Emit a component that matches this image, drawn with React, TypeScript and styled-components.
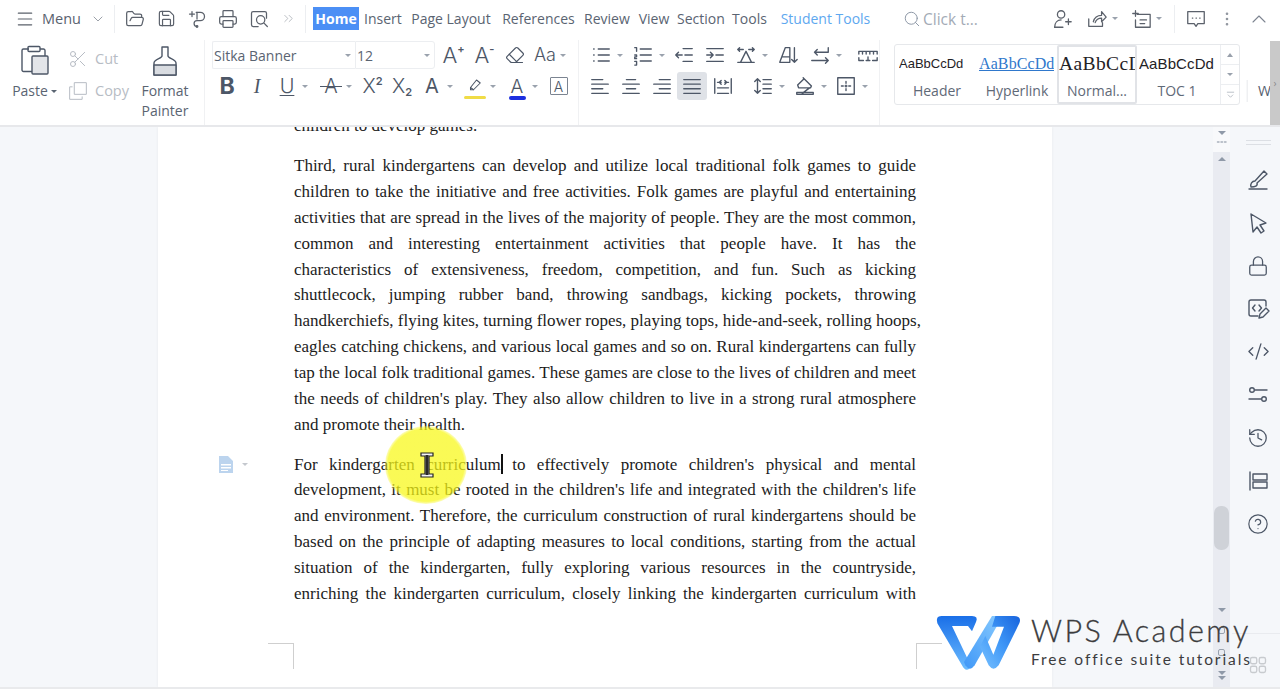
import React from "react";
import styled, { createGlobalStyle } from "styled-components";
import {
  ChevronDown, ChevronUp, ChevronsRight, CircleHelp, CodeXml, EllipsisVertical, Eraser, FolderOpen,
  History, Lock, Menu as MenuIcon, Printer, Save, Scissors, Search,
} from "lucide-react";

const Global = createGlobalStyle`
  html, body { margin: 0; padding: 0; height: 100%; overflow: hidden; background: #fff; }
  * { box-sizing: border-box; }
`;

const UI = `"Open Sans", "Noto Sans", sans-serif`;
const INK = "#4d5767";

const Root = styled.div`
  position: relative; width: 1280px; height: 689px; overflow: hidden; display: flex; flex-direction: column;
  font-family: ${UI}; color: #566070; background: #fff;
`;

/* ---------- top bar ---------- */
const TopBar = styled.header`
  display: flex; align-items: center; height: 33px; padding-left: 15px; padding-top: 4px; background: #fff;
  & > * { flex: none; }
`;
const MenuLabel = styled.span`font-size: 14.5px; margin: 0 9px 0 7px; color: #59626f;`;
const Divider = styled.span<{ $ml: number; $mr: number }>`
  width: 1px; height: 28px; flex: none; background: #eceef1; margin-left: ${(p) => p.$ml}px; margin-right: ${(p) => p.$mr}px;
`;
const QuickBtn = styled.span<{ $w?: number }>`
  display: flex; align-items: center; justify-content: center; width: ${(p) => p.$w ?? 31}px; color: #5b616b;
`;
const Tab = styled.span<{ $w: number; $active?: boolean; $accent?: boolean }>`
  display: flex; align-items: center; justify-content: center; white-space: nowrap;
  width: ${(p) => p.$w}px; height: 23px; font-size: 14px; letter-spacing: 0;
  font-weight: ${(p) => (p.$active ? 700 : 400)};
  color: ${(p) => (p.$active ? "#fff" : p.$accent ? "#5ea8ef" : "#5a6472")};
  background: ${(p) => (p.$active ? "#4b8ff5" : "transparent")};
`;
const SearchBox = styled.span`display: flex; align-items: center; gap: 2px; margin-left: 25px; width: 141px; color: #a3abb6; font-size: 15.5px;`;
const TopRight = styled.span`display: flex; align-items: center; color: #5b616b;`;
const TopBtn = styled.span<{ $w: number }>`display: flex; align-items: center; justify-content: center; flex: none; width: ${(p) => p.$w}px;`;
const SmallCaret = styled.span<{ $c?: string }>`
  display: block; width: 0; height: 0; flex: none; border-left: 3px solid transparent; border-right: 3px solid transparent;
  border-top: 3.5px solid ${(p) => p.$c ?? "#9aa2ad"};
`;

/* ---------- ribbon ---------- */
const Ribbon = styled.section`
  position: relative; display: flex; height: 94px; background: #fff; border-bottom: 2px solid #e7e8eb; z-index: 2;
`;
const Group = styled.div<{ $w: number }>`
  width: ${(p) => p.$w}px; height: 85px; margin-top: 7px; border-right: 1px solid #f0f1f3; flex: none; display: flex;
`;
const BigCol = styled.div<{ $w: number; $ml: number }>`
  width: ${(p) => p.$w}px; margin-left: ${(p) => p.$ml}px; padding-top: 5px; flex: none; display: flex; flex-direction: column; align-items: center;
  font-size: 14px; line-height: 20px; color: #5a6472; text-align: center; white-space: nowrap;
  svg { display: block; margin-bottom: 4px; flex: none; }
`;
const PasteLabel = styled.span`display: flex; align-items: center; gap: 3px;`;
const SmallCol = styled.div`width: 62px; margin-left: 12px; padding-top: 8px; flex: none; display: flex; flex-direction: column; gap: 11px;`;
const GreyAction = styled.div`display: flex; align-items: center; gap: 7px; height: 21px; font-size: 14.5px; color: #b7bcc4;`;
const Rows = styled.div<{ $pl: number }>`padding: 1px 0 0 ${(p) => p.$pl}px; display: flex; flex-direction: column; gap: 3px;`;
const Row = styled.div`display: flex; align-items: center; height: 28px;`;
const Select = styled.div<{ $w: number }>`
  display: flex; align-items: center; justify-content: space-between; width: ${(p) => p.$w}px; height: 28px; padding: 0 4px 0 1px;
  border: 1px solid #eceef1; font-size: 14px; color: #5a6472; border-right-width: 0; border-radius: 2px 0 0 2px;
  &:nth-child(2) { border-right-width: 1px; border-radius: 0 3px 3px 0; }
`;
const Tool = styled.div<{ $w: number; $ml?: number; $active?: boolean; $caret?: boolean }>`
  display: flex; align-items: center; flex: none; height: 28px; width: ${(p) => p.$w}px; margin-left: ${(p) => p.$ml ?? 0}px;
  justify-content: ${(p) => (p.$caret ? "flex-start" : "center")}; padding-left: ${(p) => (p.$caret ? 5 : 0)}px;
  gap: 5px; color: ${INK}; border-radius: 3px; background: ${(p) => (p.$active ? "#dfe2e7" : "transparent")};
`;
const Glyph = styled.span<{ $size?: number; $weight?: number; $deco?: string; $family?: string }>`
  position: relative; display: inline-flex; align-items: flex-start; justify-content: center; width: 20px; line-height: 1; color: ${INK};
  font-family: ${(p) => p.$family ?? `Inter, sans-serif`}; font-size: ${(p) => p.$size ?? 20}px; font-weight: ${(p) => p.$weight ?? 300};
  text-decoration: ${(p) => p.$deco ?? "none"}; text-underline-offset: 2px; text-decoration-thickness: 1px;
`;
const Sup = styled.sup`font-size: 11px; font-weight: 600; line-height: 1; vertical-align: top; margin-left: 0;`;
const Sub = styled.sub`font-size: 11px; font-weight: 600; line-height: 1; align-self: flex-end; margin-bottom: -2px;`;
const Strike = styled.span`position: absolute; left: -1px; right: -1px; top: 10px; height: 1px; background: ${INK};`;
const ColorBar = styled.span<{ $c: string; $wide?: boolean }>`
  position: absolute; left: ${(p) => (p.$wide ? -1 : 1.5)}px; right: ${(p) => (p.$wide ? -1 : 1.5)}px; bottom: -4px; height: 3.5px; border-radius: 2px; background: ${(p) => p.$c};
`;
const Boxed = styled.span`
  display: flex; align-items: center; justify-content: center; width: 18px; height: 18px; border: 1px solid #7b8491; border-radius: 1px;
  font: 300 14px Inter, sans-serif; color: ${INK};
`;

const Styles = styled.div`
  display: flex; flex: none; width: 346px; height: 61px; margin: 11px 0 0 14px; border: 1px solid #e6e8eb; border-radius: 3px; padding-left: 2px;
`;
const StyleItem = styled.div<{ $sel?: boolean }>`
  width: 80px; flex: none; overflow: hidden; display: flex; flex-direction: column; align-items: center;
  border: 2px solid ${(p) => (p.$sel ? "#e1e3e7" : "transparent")}; border-radius: 2px; padding-top: 3px;
`;
const Preview = styled.div<{ $font: string; $size: number; $color?: string; $line?: boolean; $ls?: number }>`
  align-self: flex-start; max-width: 76px; overflow: hidden; height: 27px; line-height: 27px; white-space: nowrap; font-family: ${(p) => p.$font}; font-size: ${(p) => p.$size}px; color: ${(p) => p.$color ?? "#1f2226"};
  text-decoration: ${(p) => (p.$line ? "underline" : "none")}; letter-spacing: ${(p) => p.$ls ?? 0}px;
`;
const StyleName = styled.div`font-size: 14px; line-height: 22px; margin-top: 3px; color: #5f6977; white-space: nowrap;`;
const StyleScroll = styled.div`width: 19px; margin-left: 3px; border-left: 1px solid #eceef1; display: flex; flex-direction: column;`;
const ScrollCell = styled.div`flex: 1; display: flex; align-items: center; justify-content: center; border-bottom: 1px solid #eceef1; &:last-child { border-bottom: 0; }`;
const UpCaret = styled.span`display: block; width: 0; height: 0; border-left: 3px solid transparent; border-right: 3px solid transparent; border-bottom: 4px solid #98a0ab;`;
const MoreLabel = styled.div`margin: 47px 0 0 7px; padding-left: 10px; width: 23px; border-left: 1px solid #eff0f2; font-size: 14px; height: 22px; padding-top: 1px; overflow: hidden; box-shadow: -0.5px 0 0 #eff0f2;`;
const RibbonEnd = styled.div`
  position: absolute; right: 0; top: 8px; bottom: 0; width: 10px; background: #c9c9c9; color: #8a8a8a;
  display: flex; align-items: center; justify-content: center; font-size: 10px;
`;

/* ---------- document ---------- */
const Main = styled.main`flex: 1; min-height: 0; display: flex; background: #f5f7fa;`;
const DocArea = styled.div`width: 1213px; flex: none; padding-left: 158px; overflow: hidden;`;
const Page = styled.article`
  position: relative; width: 894px; height: 100%; background: #fff; box-shadow: 0 0 3px rgba(0,0,0,.06); overflow: hidden; padding-left: 136px;
  font-family: "Liberation Serif", "Times New Roman", serif; font-size: 17px; color: #1c1c1c;
`;
const Body = styled.div`margin-top: -13.6px;`;
const Para = styled.div`position: relative; margin-bottom: 14px;`;
const Line = styled.div<{ $last?: boolean; $wide?: boolean }>`
  width: ${(p) => (p.$wide ? 627 : 622)}px; height: 25.85px; line-height: 25.85px; white-space: nowrap; text-align: justify;
  text-align-last: ${(p) => (p.$last ? "left" : "justify")};
`;
const TextCaret = styled.span`display: inline-block; width: 0; height: 20px; border-left: 2px solid #111; vertical-align: -4px; margin-right: -2px;`;
const ParaGadget = styled.span`position: absolute; left: -76px; top: 4px; display: flex; align-items: center; gap: 8px;`;
const CropRow = styled.div`display: flex; justify-content: space-between; width: 674px; margin: 36px 0 0 -26px;`;
const Crop = styled.span<{ $right?: boolean }>`
  width: 26px; height: 26px; border-top: 1px solid #cfcfcf;
  ${(p) => (p.$right ? "border-left: 1px solid #cfcfcf;" : "border-right: 1px solid #cfcfcf;")}
`;

const ScrollBar = styled.div`width: 17px; flex: none; display: flex; flex-direction: column; align-items: center; background: #e9ebf1;`;
const ScrollHead = styled.div`width: 100%; height: 25px; flex: none; background: #f8f9fb; display: flex; flex-direction: column; align-items: center; justify-content: center; gap: 1px;`;
const ScrollTriangle = styled.span<{ $up?: boolean }>`
  display: block; width: 0; height: 0; border-left: 4px solid transparent; border-right: 4px solid transparent;
  ${(p) => (p.$up ? "border-bottom: 4px solid #8f99a8;" : "border-top: 4px solid #8f99a8;")}
`;
const UpWrap = styled.div`margin-top: 5px; height: 349px; flex: none;`;
const Thumb = styled.div`width: 15px; height: 44px; border-radius: 7px; background: #cfd2d8; flex: none;`;
const DownWrap = styled.div`margin-top: 58px; display: flex; flex-direction: column; align-items: center; gap: 15px;`;
const Nub = styled.span`display: block; width: 7px; height: 7px; border: 1px solid #98a1ae; border-radius: 2px;`;
const DoubleDown = styled.div`display: flex; flex-direction: column; gap: 1px;`;

const Side = styled.aside`flex: 1; margin-left: 2px; padding-left: 4px; display: flex; flex-direction: column; align-items: center; color: ${INK};`;
const Grip = styled.div`width: 25px; height: 5px; margin: 13px 0 13px; flex: none; border-top: 1px solid #dcdfe4; border-bottom: 1px solid #dcdfe4;`;
const SideBtn = styled.div`height: 43px; display: flex; align-items: center; justify-content: center; flex: none;`;
const SideFoot = styled.div`
  margin: 88px 0 0 -4px; width: 48px; border-top: 1px solid #e9ebef; flex: 1; display: flex; justify-content: center; padding: 21px 0 0 4px; color: #c8cbcf;
`;
const BottomEdge = styled.div`height: 2px; background: #e9eaec; flex: none;`;

/* ---------- overlays ---------- */
const Spot = styled.div`
  position: absolute; left: 385px; top: 426px; width: 82px; height: 78px; border-radius: 50%; pointer-events: none;
  background: radial-gradient(closest-side, rgba(248,248,20,.72) 93%, rgba(248,248,60,.3) 100%);
`;
const Beam = styled.svg`position: absolute; left: 419px; top: 452px;`;
const Brand = styled.div`position: absolute; left: 930px; top: 608px; display: flex; pointer-events: none;`;
const BrandText = styled.div`margin: 4px 0 0 1px; color: #3c3c3e; white-space: nowrap;`;
const BrandTitle = styled.div`font-family: Lato, sans-serif; font-size: 30.5px; font-weight: 300; line-height: 36px; letter-spacing: 2.4px; -webkit-text-stroke: .3px #3c3c3e;`;
const BrandSub = styled.div`font-family: Lato, sans-serif; font-size: 15.5px; line-height: 20px; letter-spacing: 1.92px; margin-top: 1px;`;

/* ---------- drawings ---------- */
const Svg = ({ s = 22, w = 1.4, c = "currentColor", children }: { s?: number; w?: number; c?: string; children: React.ReactNode }) => (
  <svg width={s} height={s} viewBox="0 0 24 24" fill="none" stroke={c} strokeWidth={w} strokeLinecap="round" strokeLinejoin="round">{children}</svg>
);

const PasteIcon = () => (
  <svg width="30" height="32" viewBox="0 0 30 32" fill="none" stroke={INK} strokeWidth="1.4" strokeLinejoin="round">
    <path d="M9 4H3.5a1.5 1.5 0 0 0-1.5 1.5V25a1.5 1.5 0 0 0 1.5 1.5H12" /><path d="M20 4h3.5A1.5 1.5 0 0 1 25 5.5V11" />
    <rect x="8" y="1.5" width="12" height="5" rx="1" />
    <rect x="12" y="11" width="16" height="18" rx="1" fill="#e3e5e9" />
  </svg>
);
const PainterIcon = () => (
  <svg width="26" height="32" viewBox="0 0 26 32" fill="none" stroke={INK} strokeWidth="1.4" strokeLinejoin="round">
    <path d="M10 2h6v9c0 2.5 8 3 8 7v12H2V18c0-4 8-4.500 8-7z" /><path d="M2 20h22v10H2z" fill="#d9dce1" />
  </svg>
);
const Lines = ({ d }: { d: string }) => <Svg w={1.5}><path d={d} /></Svg>;

const BrandLogo = () => (
  <svg width="100" height="70" viewBox="0 0 300 210">
    <defs>
      <linearGradient id="wa" x1="0" y1="0" x2="0" y2="1"><stop offset="0" stopColor="#1a6fe8" /><stop offset="1" stopColor="#6cbcff" /></linearGradient>
      <linearGradient id="wb" x1="1" y1="0" x2="0" y2="1"><stop offset="0" stopColor="#8accff" /><stop offset="1" stopColor="#3f97f7" /></linearGradient>
      <linearGradient id="wc" x1="1" y1="0" x2="0" y2="1"><stop offset="0" stopColor="#1763dd" /><stop offset=".5" stopColor="#3f97f7" /><stop offset="1" stopColor="#79c2ff" /></linearGradient>
    </defs>
    <path fill="url(#wa)" d="M34 24H126Q146 24 138 42L126 70L114 54H66L122 172L118 182Q106 192 96 172L22 46Q16 24 34 24Z" />
    <path fill="url(#wb)" d="M186 24H218L134 172Q120 192 106 172L102 162Z" />
    <path fill="url(#wc)" d="M196 24H252Q276 24 268 46L206 172Q190 192 176 172L150 116L166 84L190 140L222 56H186Z" />
  </svg>
);

const paragraphs: { lines: string[]; gadget?: boolean }[] = [
  { lines: ["children to develop games."] },
  { lines: [
    "Third, rural kindergartens can develop and utilize local traditional folk games to guide",
    "children to take the initiative and free activities. Folk games are playful and entertaining",
    "activities that are spread in the lives of the majority of people. They are the most common,",
    "common and interesting entertainment activities that people have. It has the",
    "characteristics of extensiveness, freedom, competition, and fun. Such as kicking",
    "shuttlecock, jumping rubber band, throwing sandbags, kicking pockets, throwing",
    "handkerchiefs, flying kites, turning flower ropes, playing tops, hide-and-seek, rolling hoops,",
    "eagles catching chickens, and various local games and so on. Rural kindergartens can fully",
    "tap the local folk traditional games. These games are close to the lives of children and meet",
    "the needs of children's play. They also allow children to live in a strong rural atmosphere",
    "and promote their health.",
  ] },
  { gadget: true, lines: [
    "For kindergarten curriculum| to effectively promote children's physical and mental",
    "development, it must be rooted in the children's life and integrated with the children's life",
    "and environment. Therefore, the curriculum construction of rural kindergartens should be",
    "based on the principle of adapting measures to local conditions, starting from the actual",
    "situation of the kindergarten, fully exploring various resources in the countryside,",
    "enriching the kindergarten curriculum, closely linking the kindergarten curriculum with",
  ] },
];

const tabs = [
  { t: "Home", w: 46, active: true }, { t: "Insert", w: 48 }, { t: "Page Layout", w: 88 }, { t: "References", w: 87 },
  { t: "Review", w: 50 }, { t: "View", w: 44 }, { t: "Section", w: 50 }, { t: "Tools", w: 47 }, { t: "Student Tools", w: 105, accent: true },
];

const styleItems = [
  { name: "Header", font: `"Liberation Sans", sans-serif`, size: 13 },
  { name: "Hyperlink", font: `"Liberation Serif", serif`, size: 16, color: "#2f78cc", line: true, ls: 0.1 },
  { name: "Normal...", font: `"Liberation Serif", serif`, size: 19.5, sel: true, ls: 0.4 },
  { name: "TOC 1", font: `"Liberation Sans", sans-serif`, size: 15, ls: 0.1 },
];

const ToolItem = ({ w, ml, active, caret, children }: { w: number; ml?: number; active?: boolean; caret?: boolean; children: React.ReactNode }) => (
  <Tool $w={w} $ml={ml} $active={active} $caret={caret}>{children}{caret && <SmallCaret />}</Tool>
);

const sideIcons: React.ReactNode[] = [
  <Svg s={24}><path d="M3 21h18" /><path d="M5 19c-1-3 1-6 4-6l9-10 3 3-10 9c1 3-2 4-6 4z" /></Svg>,
  <Svg s={24}><path d="M5 3l15 9-6 2 4 6-3 2-4-6-4 5z" /></Svg>,
  <Lock size={22} strokeWidth={1.4} />,
  <Svg s={24}><path d="M12 19H5a2 2 0 0 1-2-2V5a2 2 0 0 1 2-2h13a2 2 0 0 1 2 2v4" /><path d="M9 8l-2.500 3L9 14M13 8l2.500 3L13 14" /><path d="M13 21l1-4 6-6 3 3-6 6z" /></Svg>,
  <CodeXml size={23} strokeWidth={1.4} />,
  <Svg s={24}><circle cx="6" cy="7" r="2.3" /><path d="M9 7h12M3 16h12" /><circle cx="18" cy="16" r="2.3" /></Svg>,
  <History size={22} strokeWidth={1.4} />,
  <Svg s={24}><path d="M4 3v18" /><rect x="7" y="5" width="14" height="6" /><rect x="7" y="13" width="14" height="6" /></Svg>,
  <CircleHelp size={22} strokeWidth={1.3} />,
];

export default function App() {
  return (
    <Root>
      <Global />
      <TopBar>
        <MenuIcon size={20} strokeWidth={1.4} color="#5b616b" />
        <MenuLabel>Menu</MenuLabel>
        <ChevronDown size={16} strokeWidth={1.3} color="#8c929b" />
        <Divider $ml={8} $mr={5} />
        <QuickBtn><FolderOpen size={20} strokeWidth={1.5} /></QuickBtn>
        <QuickBtn><Save size={19} strokeWidth={1.5} /></QuickBtn>
        <QuickBtn>
          <Svg s={20} w={1.5}><path d="M3 6h6M6 3v6" /><path d="M11 4h5a5 5 0 0 1 0 10h-4a3.500 3.500 0 0 0 0 7" /><path d="M12 4v8" /><circle cx="12" cy="21" r="1" /></Svg>
        </QuickBtn>
        <QuickBtn><Printer size={20} strokeWidth={1.5} /></QuickBtn>
        <QuickBtn>
          <Svg s={20} w={1.5}><path d="M21 11V5a2 2 0 0 0-2-2H5a2 2 0 0 0-2 2v14a2 2 0 0 0 2 2h6" /><circle cx="14" cy="13" r="5" /><path d="M18 17l4 4" /></Svg>
        </QuickBtn>
        <QuickBtn $w={28}><ChevronsRight size={15} strokeWidth={1.2} color="#a4a9b0" /></QuickBtn>
        <Divider $ml={2} $mr={7} />
        {tabs.map((t) => <Tab key={t.t} $w={t.w} $active={t.active} $accent={t.accent}>{t.t}</Tab>)}
        <SearchBox><Search size={18} strokeWidth={1.3} color="#8d97a6" />Click t...</SearchBox>
        <TopRight>
          <TopBtn $w={36}><Svg s={22}><circle cx="11" cy="7" r="4" /><path d="M4 21c0-5 3-8 7-8M16 15h6M19 12v6" /><path d="M4 21h9" /></Svg></TopBtn>
          <TopBtn $w={44}><Svg s={22}><path d="M3 12v8h15v-4" /><path d="M8 15c1-4 4-7 9-7V4l5 6-5 5v-4c-4 0-6 2-7 5" /></Svg>&nbsp;<SmallCaret /></TopBtn>
          <TopBtn $w={44}><Svg s={22}><path d="M8 7h14v14H6v-8M3 6h6M6 3v6M11 13h7M11 17h5" /></Svg>&nbsp;<SmallCaret /></TopBtn>
          <Divider $ml={6} $mr={8} />
          <TopBtn $w={27}><Svg s={22}><path d="M3 4h18v13h-7l-2 3-2-3H3z" /><path d="M8 11h.5M12 11h.5M16 11h.5" /></Svg></TopBtn>
          <TopBtn $w={34}><EllipsisVertical size={18} strokeWidth={1.5} color="#8c929b" /></TopBtn>
          <TopBtn $w={30}><ChevronUp size={24} strokeWidth={1.1} color="#7c8490" /></TopBtn>
        </TopRight>
      </TopBar>

      <Ribbon>
        <Group $w={205}>
          <BigCol $w={43} $ml={13}><PasteIcon /><PasteLabel>Paste<SmallCaret $c="#5a6472" /></PasteLabel></BigCol>
          <SmallCol>
            <GreyAction><Scissors size={20} strokeWidth={1.2} />Cut</GreyAction>
            <GreyAction>
              <Svg s={20} w={1.2}><rect x="8" y="2" width="14" height="14" /><path d="M5 7H2v15h15v-3" /></Svg>Copy
            </GreyAction>
          </SmallCol>
          <BigCol $w={48} $ml={11}><PainterIcon /><span>Format</span><span>Painter</span></BigCol>
        </Group>

        <Group $w={374}>
          <Rows $pl={7}>
            <Row>
              <Select $w={143}>Sitka Banner<SmallCaret /></Select>
              <Select $w={80}>12<SmallCaret /></Select>
              <Tool $w={31} $ml={3}><Glyph $size={22}>A<Sup>+</Sup></Glyph></Tool>
              <Tool $w={31}><Glyph $size={22}>A<Sup>-</Sup></Glyph></Tool>
              <Tool $w={30}><Eraser size={20} strokeWidth={1.4} /></Tool>
              <ToolItem w={48} caret><Glyph $size={18}>Aa</Glyph></ToolItem>
            </Row>
            <Row>
              <Tool $w={30}><Glyph $size={23} $weight={700}>B</Glyph></Tool>
              <Tool $w={30}><Glyph $size={20} $family={`"Liberation Serif", serif`} $weight={400}><i>I</i></Glyph></Tool>
              <ToolItem w={44} caret><Glyph $size={20} $deco="underline">U</Glyph></ToolItem>
              <ToolItem w={42} caret><Glyph $size={20}>A<Strike /></Glyph></ToolItem>
              <Tool $w={29}><Glyph $size={20}>X<Sup>2</Sup></Glyph></Tool>
              <Tool $w={30}><Glyph $size={20}>X<Sub>2</Sub></Glyph></Tool>
              <ToolItem w={43} caret><Glyph $size={20} $weight={400}>A</Glyph></ToolItem>
              <ToolItem w={42} caret>
                <Glyph><Svg s={18}><path d="M6 14l8-10 5 4-9 9H6z" /><path d="M6 14l4 3" /></Svg><ColorBar $c="#f0dc46" $wide /></Glyph>
              </ToolItem>
              <ToolItem w={42} caret><Glyph $size={19}>A<ColorBar $c="#1c2fe0" /></Glyph></ToolItem>
              <Tool $w={29}><Boxed>A</Boxed></Tool>
            </Row>
          </Rows>
        </Group>

        <Group $w={301}>
          <Rows $pl={6}>
            <Row>
              <ToolItem w={42} caret><Lines d="M4 5.500h.5M4 12h.5M4 18.500h.5M9 5.500h12M9 12h12M9 18.500h12" /></ToolItem>
              <ToolItem w={42} caret><Lines d="M3 4h2v4M3 12h2v2H3v2h2M3 19h2v4H3M9 5.500h12M9 12h12M9 18.500h12" /></ToolItem>
              <Tool $w={30}><Lines d="M11 5h10M11 19h10M13 12h8M3 12h7M6 9l-3 3 3 3" /></Tool>
              <Tool $w={31}><Lines d="M3 5h18M3 19h18M3 12h7M13 12h8M7 9l3 3-3 3" /></Tool>
              <ToolItem w={42} caret><Lines d="M3 20h18M6 20l6-12 6 12M3 6h6M15 6h6M5 4L3 6l2 2M19 4l2 2-2 2" /></ToolItem>
              <Tool $w={32}><Lines d="M3 20L9 4h5v16zM6 14h8M19 4v16M16 17l3 3 3-3" /></Tool>
              <ToolItem w={48} caret><Lines d="M21 4v5H6M9 6L6 9l3 3M3 18h18M18 15l3 3-3 3" /></ToolItem>
              <Tool $w={32}><Lines d="M2 8h20M2 8v3M22 8v3M6 8v3M10 8v3M14 8v3M18 8v3M3 18h4M17 18h4M12 14v4M2 15v3M22 15v3M10 18h4" /></Tool>
            </Row>
            <Row>
              <Tool $w={30}><Lines d="M3 5h12M3 10h18M3 15h12M3 20h18" /></Tool>
              <Tool $w={31}><Lines d="M7 5h10M3 10h18M7 15h10M3 20h18" /></Tool>
              <Tool $w={31}><Lines d="M9 5h12M3 10h18M9 15h12M3 20h18" /></Tool>
              <Tool $w={30} $active><Lines d="M3 5h18M3 10h18M3 15h18M3 20h18" /></Tool>
              <Tool $w={31}><Lines d="M3 4v16M21 4v16M6 20h12M6 14h12M6 8h4M14 8h4M10 6L8 8l2 2M14 6l2 2-2 2" /></Tool>
              <ToolItem w={42} ml={9} caret><Lines d="M6 4v16M3 7l3-3 3 3M3 17l3 3 3-3M12 5h9M12 10h9M12 15h9M12 20h9" /></ToolItem>
              <ToolItem w={41} caret><Lines d="M4 11l7-7 8 8-1 2H5zM11 4l-1-1M3 19h18v2H3zM9 20l8-6" /></ToolItem>
              <ToolItem w={42} caret><Lines d="M3 3h18v18H3zM12 7v2M12 11v2M12 15v2M7 12h2M11 12h2M15 12h2" /></ToolItem>
            </Row>
          </Rows>
        </Group>

        <Styles>
          {styleItems.map((s) => (
            <StyleItem key={s.name} $sel={s.sel}>
              <Preview $font={s.font} $size={s.size} $color={s.color} $line={s.line} $ls={s.ls}>AaBbCcDd</Preview>
              <StyleName>{s.name}</StyleName>
            </StyleItem>
          ))}
          <StyleScroll>
            <ScrollCell><UpCaret /></ScrollCell>
            <ScrollCell><SmallCaret /></ScrollCell>
            <ScrollCell><Svg s={11} c="#98a0ab"><path d="M5 7h14M7 13l5 5 5-5" /></Svg></ScrollCell>
          </StyleScroll>
        </Styles>
        <MoreLabel>W</MoreLabel>
        <RibbonEnd>›</RibbonEnd>
      </Ribbon>

      <Main>
        <DocArea>
          <Page>
            <Body>
              {paragraphs.map((p, pi) => (
                <Para key={pi}>
                  {p.gadget && (
                    <ParaGadget>
                      <svg width="16" height="17" viewBox="0 0 16 17" fill="#bcd4ee"><path d="M1 0h9l5 5v12H1zM3 8v1.500h10V8zm0 3v1.500h10V11zm0 3v1h7v-1z" /></svg>
                      <SmallCaret $c="#c4c8ce" />
                    </ParaGadget>
                  )}
                  {p.lines.map((l, li) => {
                    const parts = l.split("|");
                    const isLast = li === p.lines.length - 1 && pi < 2;
                    return (
                      <Line key={li} $last={isLast} $wide={l.startsWith("handkerchiefs")}>
                        {parts[0]}{parts.length > 1 && <TextCaret />}{parts[1]}
                      </Line>
                    );
                  })}
                </Para>
              ))}
            </Body>
            <CropRow><Crop /><Crop $right /></CropRow>
          </Page>
        </DocArea>
        <ScrollBar>
          <ScrollHead><ScrollTriangle /><Svg s={12} c="#a7afbb" w={3}><path d="M3 12h3M10 12h3M17 12h3" /></Svg></ScrollHead>
          <UpWrap><ScrollTriangle $up /></UpWrap>
          <Thumb />
          <DownWrap>
            <ScrollTriangle />
            <Nub />
            <Nub />
            <DoubleDown><ScrollTriangle /><ScrollTriangle /></DoubleDown>
          </DownWrap>
        </ScrollBar>
        <Side>
          <Grip />
          {sideIcons.map((ic, i) => <SideBtn key={i}>{ic}</SideBtn>)}
          <SideFoot>
            <Svg s={20} w={1.6}><rect x="3" y="3" width="7.5" height="7.5" rx="2" /><rect x="13.5" y="3" width="7.5" height="7.5" rx="2" /><rect x="3" y="13.5" width="7.5" height="7.5" rx="2" /><rect x="13.5" y="13.5" width="7.5" height="7.5" rx="2" /></Svg>
          </SideFoot>
        </Side>
      </Main>
      <BottomEdge />

      <Spot />
      <Beam width="16" height="26" viewBox="0 0 16 26">
        <path d="M2 1h12v3h-4v18h4v3H2v-3h4V4H2z" fill="#f4f4f4" stroke="#222" strokeWidth="1.2" />
        <path d="M6.500 3h3v20h-3z" fill="#2a2a2a" />
      </Beam>
      <Brand>
        <BrandLogo />
        <BrandText>
          <BrandTitle>WPS Academy</BrandTitle>
          <BrandSub>Free office suite tutorials</BrandSub>
        </BrandText>
      </Brand>
    </Root>
  );
}
